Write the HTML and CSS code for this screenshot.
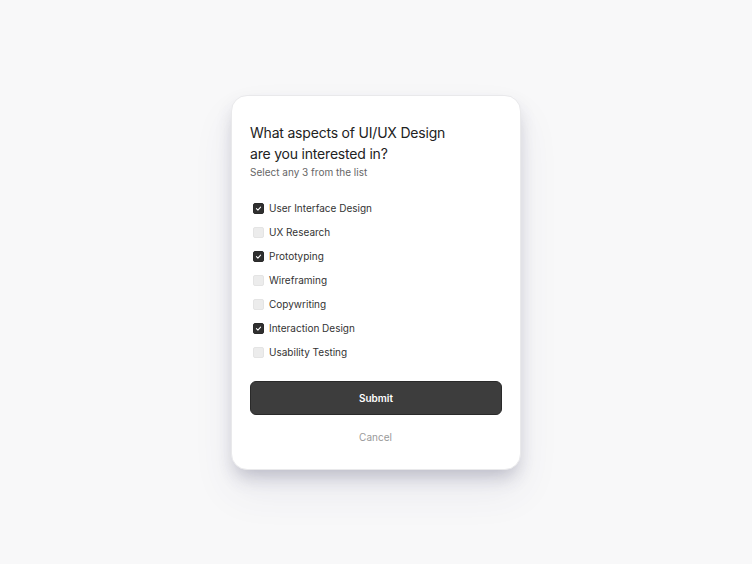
FILE: index.html
```html
<!DOCTYPE html>
<html>
<head>
<meta charset="utf-8">
<link rel="stylesheet" href="styles.css">
</head>
<body>
<div class="page">
  <div class="card">
    <h1 class="title">What aspects of UI/UX Design<br>are you interested in?</h1>
    <p class="subtitle">Select any 3 from the list</p>
    <ul class="options">
      <li class="option"><span class="box checked"><svg viewBox="0 0 12 12"><path d="M3.2 6.2 5.2 8.1 8.8 4.2" fill="none" stroke="#fff" stroke-width="1.4" stroke-linecap="round" stroke-linejoin="round"/></svg></span>User Interface Design</li>
      <li class="option"><span class="box"></span>UX Research</li>
      <li class="option"><span class="box checked"><svg viewBox="0 0 12 12"><path d="M3.2 6.2 5.2 8.1 8.8 4.2" fill="none" stroke="#fff" stroke-width="1.4" stroke-linecap="round" stroke-linejoin="round"/></svg></span>Prototyping</li>
      <li class="option"><span class="box"></span>Wireframing</li>
      <li class="option"><span class="box"></span>Copywriting</li>
      <li class="option"><span class="box checked"><svg viewBox="0 0 12 12"><path d="M3.2 6.2 5.2 8.1 8.8 4.2" fill="none" stroke="#fff" stroke-width="1.4" stroke-linecap="round" stroke-linejoin="round"/></svg></span>Interaction Design</li>
      <li class="option"><span class="box"></span>Usability Testing</li>
    </ul>
    <button class="submit">Submit</button>
    <div class="cancel">Cancel</div>
  </div>
</div>
</body>
</html>
```
FILE: styles.css
```css
html, body {
  margin: 0;
  padding: 0;
  background: #f8f8f9;
  font-family: Inter, "Noto Sans", sans-serif;
}
.page {
  width: 752px;
  height: 564px;
  display: flex;
  justify-content: center;
  padding-top: 95px;
  box-sizing: border-box;
}
.card {
  width: 290px;
  height: 375px;
  box-sizing: border-box;
  background: #fff;
  border: 1px solid #e9e9eb;
  border-radius: 16px;
  padding: 26px 19px 0 18px;
  box-shadow: 0 10px 18px -4px rgba(60, 60, 95, 0.28), 0 22px 40px rgba(70, 70, 110, 0.08);
}
.title {
  margin: 0;
  font-size: 14px;
  line-height: 21px;
  font-weight: 400;
  color: #222;
  letter-spacing: -0.2px;
}
.subtitle {
  margin: 1px 0 0;
  font-size: 10px;
  line-height: 14px;
  color: #666;
}
.options {
  list-style: none;
  margin: 22px 0 0;
  padding: 0 0 0 3px;
  display: flex;
  flex-direction: column;
  gap: 10px;
}
.option {
  display: flex;
  align-items: center;
  gap: 5px;
  height: 14px;
  font-size: 10px;
  color: #333;
}
.box {
  width: 11px;
  height: 11px;
  border-radius: 2px;
  background: #ececec;
  border: 1px solid #e4e4e4;
  box-sizing: border-box;
  display: flex;
  align-items: center;
  justify-content: center;
}
.box.checked {
  background: #2f2f2f;
  border-color: #2a2a2a;
}
.box svg {
  width: 11px;
  height: 11px;
}
.submit {
  display: block;
  width: 252px;
  height: 34px;
  margin-top: 22px;
  background: #3d3d3d;
  border: 1px solid #2a2a2a;
  border-radius: 6px;
  color: #fff;
  font-family: Inter, "Noto Sans", sans-serif;
  font-size: 10px;
  font-weight: 600;
  cursor: pointer;
}
.cancel {
  margin-top: 16px;
  text-align: center;
  font-size: 10px;
  color: #999;
}
```
